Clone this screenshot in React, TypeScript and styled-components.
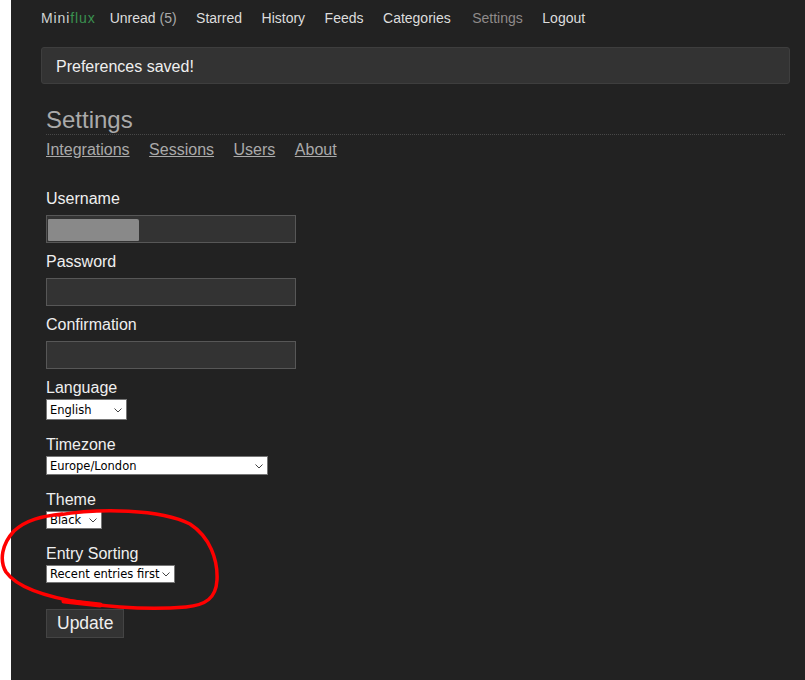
import React from "react";
import styled, { createGlobalStyle } from "styled-components";

const Global = createGlobalStyle`
  html, body { margin: 0; padding: 0; background: #ffffff; }
  body { font-family: "Liberation Sans", Arial, sans-serif; }
  * { box-sizing: border-box; }
`;

const Screen = styled.div`
  position: relative;
  width: 100%;
  height: 680px;
  overflow: hidden;
`;

const Page = styled.div`
  margin-left: 11px;
  height: 680px;
  background: #222222;
  color: #efefef;
  padding: 0 15px 0 30px;
`;

const Header = styled.header`
  display: flex;
  align-items: center;
  height: 36px;
  font-size: 14px;
  line-height: 36px;
`;

const Logo = styled.a`
  color: #cfd4d4;
  letter-spacing: 0.9px;
  margin-right: 14px;
  text-decoration: none;
  span { color: #3a9150; }
`;

const Nav = styled.nav`
  display: flex;
  gap: 19.5px;
`;

const NavLink = styled.a<{ $active?: boolean; $extra?: number }>`
  color: ${(p) => (p.$active ? "#8f8a8a" : "#dddddd")};
  text-decoration: none;
  margin-right: ${(p) => p.$extra ?? 0}px;
`;

const Counter = styled.span`
  color: #aaaaaa;
`;

const Alert = styled.div`
  margin-top: 11px;
  background: #333333;
  border: 1px solid #3e3e3e;
  border-radius: 3px;
  padding: 9px 14px 6px;
  font-size: 16px;
  line-height: 20px;
  color: #efefef;
`;

const PageHeader = styled.section`
  margin: 22px 5px 0;
`;

const Title = styled.h1`
  margin: 0;
  font-size: 24px;
  line-height: 28px;
  font-weight: normal;
  color: #aaaaaa;
  border-bottom: 1px dotted #484848;
`;

const SubNav = styled.ul`
  display: flex;
  gap: 19.5px;
  list-style: none;
  margin: 5px 0 0;
  padding: 0;
  font-size: 16px;
  line-height: 20px;
`;

const SubLink = styled.a`
  color: #aaaaaa;
  text-decoration: underline;
`;

const Form = styled.form`
  display: flex;
  flex-direction: column;
  align-items: flex-start;
  margin: 29px 5px 0;
`;

const Label = styled.label`
  display: block;
  font-size: 16px;
  line-height: 20px;
  color: #efefef;
`;

const FieldWrap = styled.div`
  position: relative;
  margin: 6px 0 9px;
`;

const TextInput = styled.input`
  display: block;
  width: 250px;
  height: 28px;
  background: #333333;
  border: 1px solid #575757;
  color: #cccccc;
  padding: 3px;
  font-size: 15px;
  outline: none;
`;

const Redaction = styled.div`
  position: absolute;
  left: 2px;
  top: 4px;
  width: 91px;
  height: 22px;
  background: #898989;
  border-radius: 1px 2px 1px 1px;
`;

const SelectWrap = styled.div<{ $w: number; $h: number }>`
  position: relative;
  width: ${(p) => p.$w}px;
  height: ${(p) => p.$h}px;
  margin: 1px 0 15px;
`;

const Select = styled.select`
  appearance: none;
  -webkit-appearance: none;
  display: block;
  width: 100%;
  height: 100%;
  margin: 0;
  padding: 0 12px 0 3px;
  background: #ffffff;
  border: 1px solid #767676;
  border-radius: 0;
  color: #000000;
  font-family: "DejaVu Sans", sans-serif;
  font-size: 11.5px;
  outline: none;
`;

const Chevron = styled.svg`
  position: absolute;
  right: 5px;
  top: 50%;
  margin-top: -2px;
  width: 8px;
  height: 5px;
  pointer-events: none;
`;

const Button = styled.button`
  margin-top: 11px;
  height: 29px;
  padding: 0 10px;
  background: #333333;
  border: 1px solid #444444;
  color: #efefef;
  font-family: "Liberation Sans", Arial, sans-serif;
  font-size: 17.5px;
  line-height: 27px;
`;

const Annotation = styled.svg`
  position: absolute;
  left: 0;
  top: 0;
  width: 805px;
  height: 680px;
  pointer-events: none;
`;

type SelProps = { w: number; h: number; value: string };

const Dropdown = ({ w, h, value }: SelProps) => (
  <SelectWrap $w={w} $h={h}>
    <Select defaultValue={value}>
      <option value={value}>{value}</option>
    </Select>
    <Chevron viewBox="0 0 8 5">
      <path d="M0.5 0.5 L4 4 L7.5 0.5" fill="none" stroke="#444" strokeWidth="1" />
    </Chevron>
  </SelectWrap>
);

export default function App() {
  return (
    <>
      <Global />
      <Screen>
        <Page>
          <Header>
            <Logo href="#">
              Mini<span>flux</span>
            </Logo>
            <Nav>
              <NavLink href="#">
                Unread <Counter>(5)</Counter>
              </NavLink>
              <NavLink href="#">Starred</NavLink>
              <NavLink href="#">History</NavLink>
              <NavLink href="#">Feeds</NavLink>
              <NavLink href="#" $extra={2}>Categories</NavLink>
              <NavLink href="#" $active>
                Settings
              </NavLink>
              <NavLink href="#">Logout</NavLink>
            </Nav>
          </Header>

          <Alert>Preferences saved!</Alert>

          <PageHeader>
            <Title>Settings</Title>
            <SubNav>
              <li><SubLink href="#">Integrations</SubLink></li>
              <li><SubLink href="#">Sessions</SubLink></li>
              <li><SubLink href="#">Users</SubLink></li>
              <li><SubLink href="#">About</SubLink></li>
            </SubNav>
          </PageHeader>

          <Form onSubmit={(e) => e.preventDefault()}>
            <Label>Username</Label>
            <FieldWrap>
              <TextInput type="text" />
              <Redaction />
            </FieldWrap>
            <Label>Password</Label>
            <FieldWrap>
              <TextInput type="password" />
            </FieldWrap>
            <Label>Confirmation</Label>
            <FieldWrap>
              <TextInput type="password" />
            </FieldWrap>

            <Label>Language</Label>
            <Dropdown w={81} h={21} value="English" />
            <Label>Timezone</Label>
            <Dropdown w={222} h={19} value="Europe/London" />
            <Label>Theme</Label>
            <Dropdown w={56} h={18} value="Black" />
            <Label>Entry Sorting</Label>
            <Dropdown w={129} h={18} value="Recent entries first" />

            <Button type="submit">Update</Button>
          </Form>
        </Page>

        <Annotation viewBox="0 0 805 680">
          <path
            d="M 58 515 C 100 508, 160 509, 190 524 C 210 537, 218 560, 217 580 C 216 598, 206 605, 186 607 C 150 610, 112 607, 84 603 C 52 598, 18 589, 6 572 C -1 560, 2 544, 14 531 C 26 520, 42 516, 62 514"
            fill="none"
            stroke="#ff0000"
            strokeWidth="3.5"
            strokeLinecap="round"
            strokeLinejoin="round"
          />
          <path d="M 64 601 L 100 605" fill="none" stroke="#ff0000" strokeWidth="5" strokeLinecap="round" />
        </Annotation>
      </Screen>
    </>
  );
}
